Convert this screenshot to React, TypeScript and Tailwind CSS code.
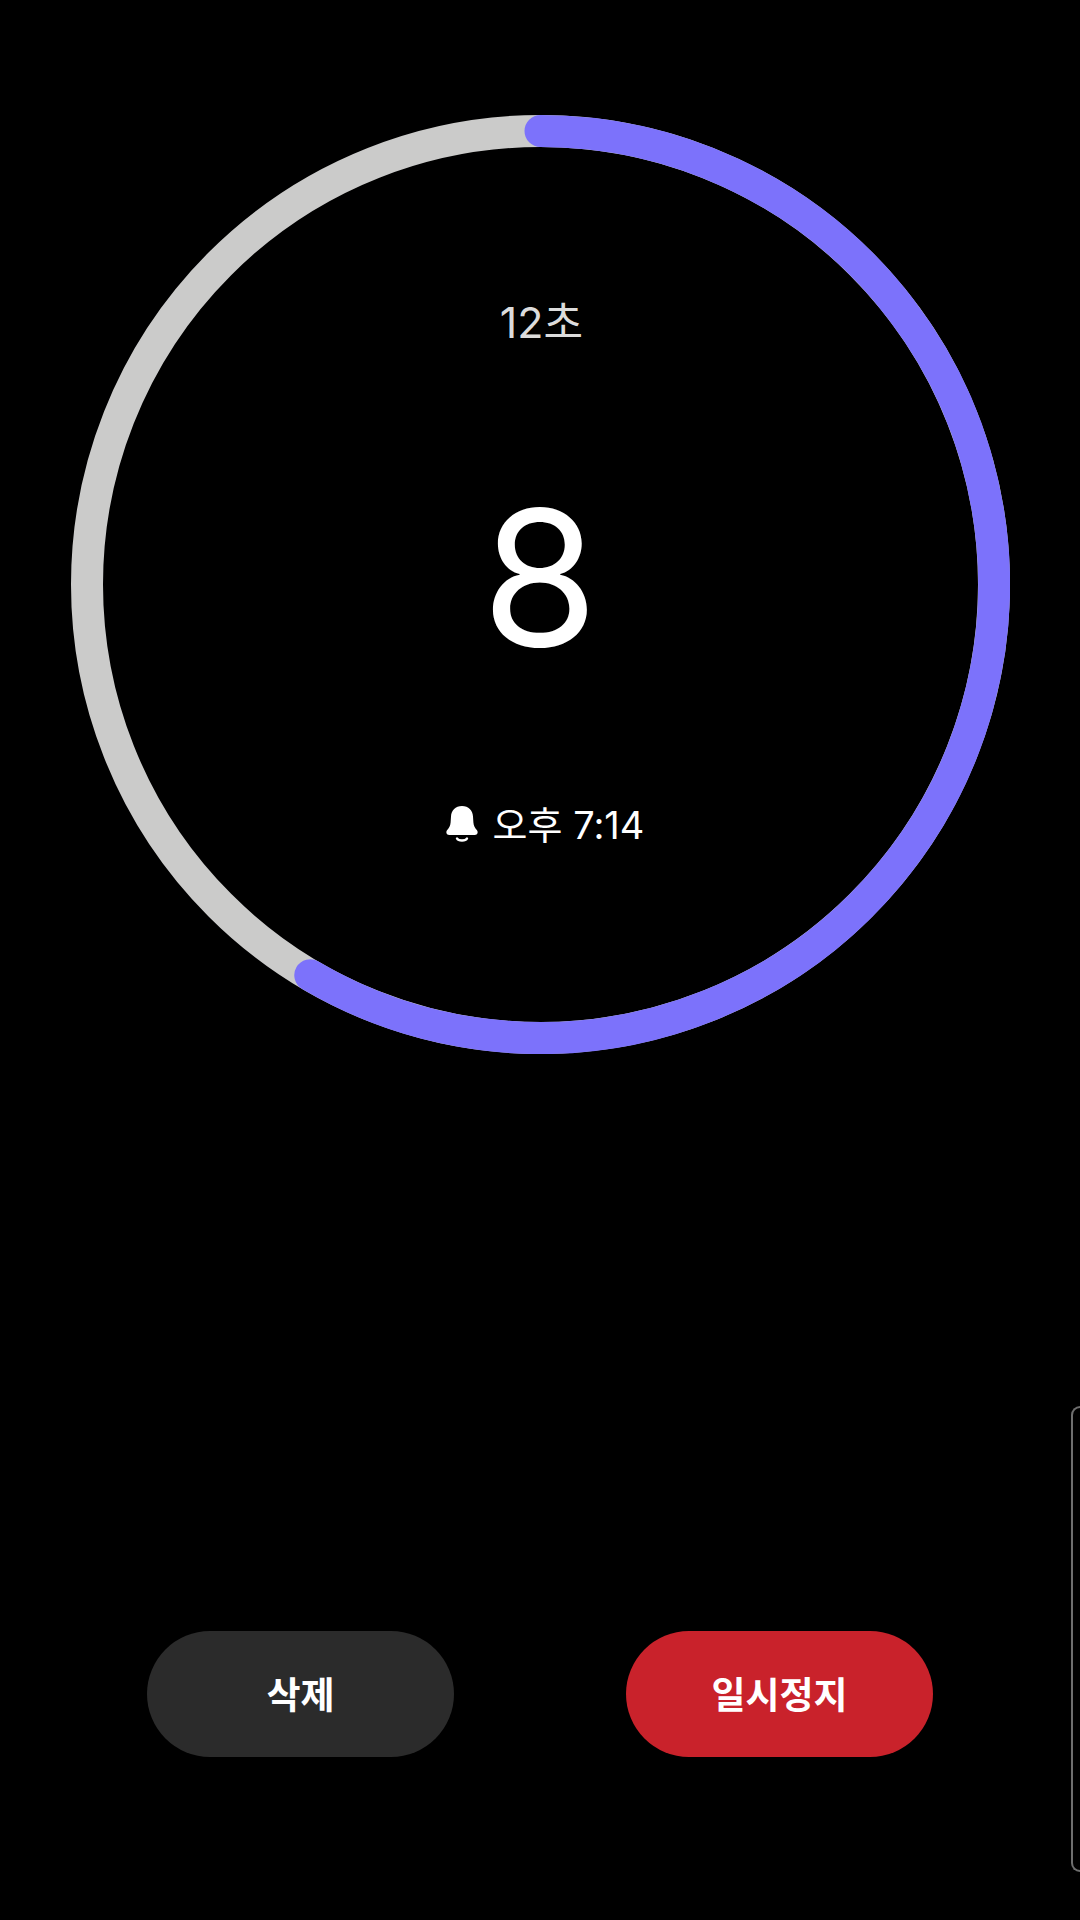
function BellIcon() {
  return (
    <svg width="32" height="38" viewBox="0 0 32 38" className="shrink-0" fill="#ffffff">
      <path d="M16 0C9.4 0 5.4 4.6 5 10.4L4.6 16.6C4.4 20 3 22 1.2 24C-0.4 25.8 0.2 29 3.4 29H28.6C31.8 29 32.4 25.8 30.8 24C29 22 27.6 20 27.4 16.6L27 10.4C26.6 4.6 22.6 0 16 0Z" />
      <path d="M11 32.5C12.5 35.2 19.5 35.2 21 32.5" fill="none" stroke="#ffffff" strokeWidth="2.4" strokeLinecap="round" />
    </svg>
  )
}

function TimerRing() {
  return (
    <svg viewBox="0 0 940 940" className="w-[940px] h-[940px] [grid-area:1/1]">
      <circle cx="470.5" cy="470.5" r="453.5" fill="none" stroke="#cbcbca" strokeWidth="32" />
      <path
        d="M470.5 17A453.5 453.5 0 1 1 240.3 861.2"
        fill="none"
        stroke="#7c72fb"
        strokeWidth="32"
        strokeLinecap="round"
      />
    </svg>
  )
}

export default function App() {
  return (
    <div className="relative w-[1080px] h-[1920px] overflow-hidden bg-black font-['Inter','Noto_Sans_CJK_KR',sans-serif]">
      <div className="flex flex-col items-center pt-[114px]">
        <div className="grid w-[940px] h-[940px]">
          <TimerRing />
          <div className="[grid-area:1/1] flex flex-col items-center pt-[183px]">
            <p className="ml-[3px] text-[43px] leading-[50px] font-normal text-[#dcdcdc]">12초</p>
            <p className="mt-[131px] text-[188px] leading-[200px] font-normal text-white">8</p>
            <div className="mt-[122px] ml-[10px] flex items-center gap-[15px] h-[50px] text-white">
              <BellIcon />
              <span className="text-[38px] leading-[50px] font-normal">오후 7:14</span>
            </div>
          </div>
        </div>

        <div className="mt-[577px] w-full flex justify-between px-[147px]">
          <button className="w-[307px] h-[126px] pt-[4px] rounded-[63px] bg-[#2b2b2b] text-[37px] font-bold text-white">
            삭제
          </button>
          <button className="w-[307px] h-[126px] pt-[4px] rounded-[63px] bg-[#c9222b] text-[37px] font-bold text-white">
            일시정지
          </button>
        </div>
      </div>

      {/* edge panel handle */}
      <div className="absolute right-0 top-[1406px] w-[9px] h-[466px] rounded-l-[10px] border-2 border-r-0 border-[#6e6e6e]" />
    </div>
  )
}
